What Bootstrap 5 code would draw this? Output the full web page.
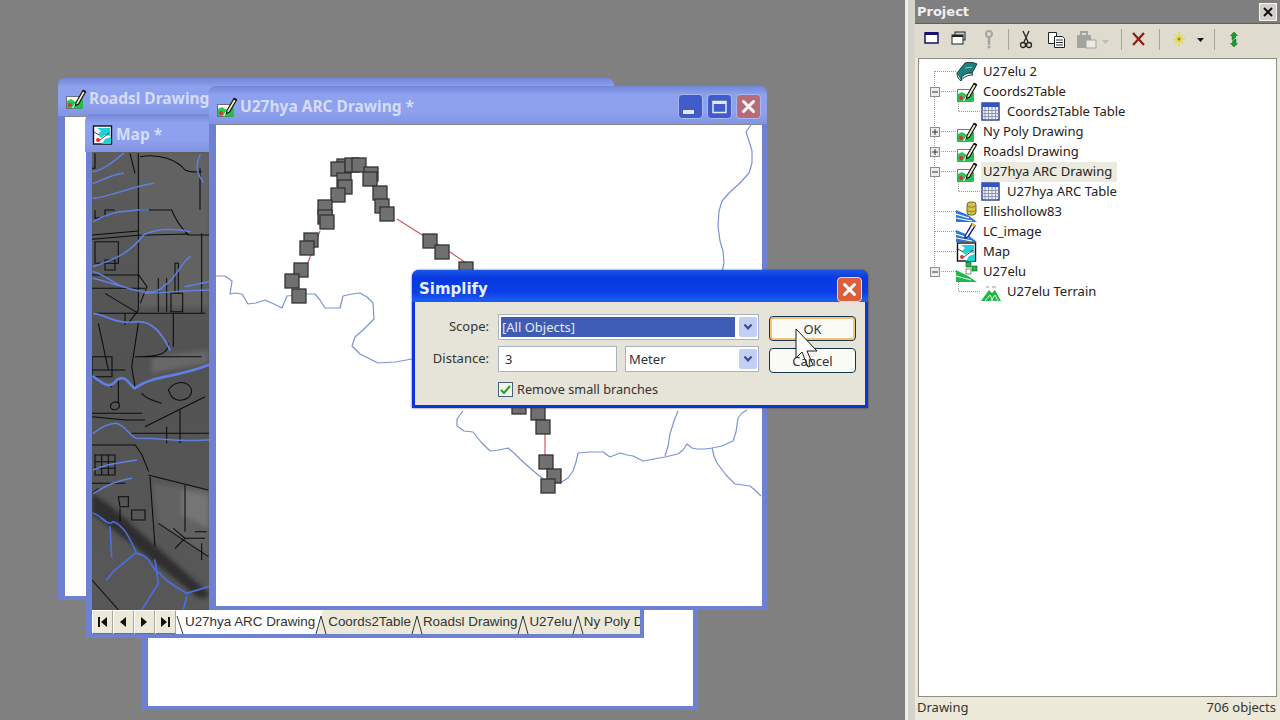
<!DOCTYPE html>
<html lang="en">
<head>
  <meta charset="UTF-8" />
  <meta name="viewport" content="width=device-width, initial-scale=1">
  <title>Simplify</title>
  <link href="https://cdn.jsdelivr.net/npm/bootstrap@5.3.3/dist/css/bootstrap.min.css" rel="stylesheet">
  <style>
    html, body { height: 100%; overflow: hidden; }
    body { font-family: "Noto Sans", sans-serif; font-size: 13px; color: #222; background: #808080; }
    .app-shell { width: 1280px; height: 720px; }
    .mdi-area { width: 905px; background: #808080; position: relative; overflow: hidden; }
    .splitter { width: 10px; background: #d6d3ca; border-left: 3px solid #efeee8; }

    /* desktop windows */
    .doc-win { position: absolute; background: #6d80d2; border-radius: 7px 7px 0 0; padding: 0 5px 4px 7px; }
    .win-blank { left: 142px; top: 200px; width: 556px; height: 510px; padding-left: 6px; }
    .win-roads { left: 58px; top: 78px; width: 556px; height: 522px; }
    .win-map { left: 86px; top: 114px; width: 558px; height: 524px; padding-left: 6px; }
    .win-arc { left: 209px; top: 86px; width: 558px; height: 524px; }
    .win-caption { height: 38px; margin: 0 -5px 0 -7px; padding: 4px 6px 0 7px; background: linear-gradient(#7387d8 0, #8ea1ee 9px, #8ea1ee 26px, #8094e2 38px); border-radius: 7px 7px 0 0; color: #d5dcf8; font-family: "Noto Sans", sans-serif; font-weight: 700; font-size: 15.5px; white-space: nowrap; gap: 2px; }
    .win-caption svg { flex: none; }
    .client-white { background: #fff; border-top: 1px solid #8a8a8a; }
    .cap-btn { width: 25px; height: 25px; border-radius: 4px; border: 1px solid #a9b8f0; background: #3f5cc8; }
    .cap-close { background: #b76a78; }

    /* map window tabs */
    .map-pic { width: 117px; height: 458px; display: block; }
    .sheet-tabs { position: absolute; left: 6px; top: 496px; width: 548px; height: 24px; background: #ece9d8; font-family: "Liberation Sans", sans-serif; font-size: 13.4px; overflow: hidden; white-space: nowrap; }
    .sheet-nav { width: 21px; height: 24px; flex: none; background: #ece9d8; border: 1px solid #fff; border-right-color: #aca899; border-bottom-color: #716f64; }
    .sheet-tab { height: 24px; line-height: 23px; color: #333; flex: none; }
    .sheet-active { background: #fff; }
    .sheet-tabs svg { flex: none; }

    /* simplify dialog */
    .simplify-dlg { position: absolute; left: 412px; top: 270px; width: 456px; height: 138px; background: #0a36d8; border-radius: 7px 7px 0 0; padding: 0 3px 3px; box-shadow: 0 0 2px #333; }
    .dlg-caption { height: 32px; flex: none; margin: 0 -3px; padding: 6px 6px 0 7px; background: linear-gradient(#1c58e6 0, #0839e0 8px, #0a3ee6 22px, #1a5cf0 30px); border-radius: 7px 7px 0 0; color: #e8effc; font-family: "DejaVu Sans", sans-serif; font-weight: 700; font-size: 15px; }
    .dlg-close { width: 25px; height: 25px; border-radius: 4px; border: 1px solid #f3d8cc; background: #d9603b; }
    .dlg-body { height: 103px; background: #e6e3d8; color: #333; position: relative; }
    .dlg-form { width: 350px; padding-top: 12px; }
    .dlg-label { width: 74px; text-align: right; margin-right: 9px; font-size: 13px; }
    .xp-field { height: 26px; border: 1px solid #a9b3bf; background: #fff; display: flex; align-items: center; padding: 0 1px 0 2px; font-size: 13px; color: #333; }
    .field-scope { width: 261px; }
    .field-num { width: 119px; height: 26px; border-radius: 0; padding: 0 6px; font-size: 13px; color: #333; border: 1px solid #a9b3bf; }
    .field-unit { width: 134px; margin-left: 8px; }
    .unit-text { padding: 2px 0 0 1px; }
    .row-gap { margin-top: 6px; }
    .check-row { margin-top: 8px; padding-left: 83px; font-size: 12.7px; }
    .sel-text { background: #3e5cb4; color: #e4e9f6; height: 20px; line-height: 20px; padding-left: 1px; }
    .combo-arrow { width: 18px; height: 20px; background: #c2d0f3; border-radius: 2px; margin-left: 4px; flex: none; display: flex; align-items: center; justify-content: center; }
    .btn-stack { padding-top: 14px; gap: 7px; margin-left: 4px; }
    .xp-btn { width: 87px; height: 25px; padding: 0; font-size: 13px; line-height: 22px; color: #333; background: #fbfbf6; border: 1px solid #17364f; border-radius: 4px; }
    .xp-btn:hover { background: #fbfbf6; color: #333; border-color: #17364f; }
    .xp-default { box-shadow: inset 0 0 0 2px #f2c27a; }
    .xp-check { width: 15px; height: 15px; border: 1px solid #46627a; background: #f3f3ea; margin: 0 4px 0 0; flex: none; }
    .mouse-ptr { position: absolute; left: 380px; top: 26px; }
    .over-ptr { position: relative; z-index: 2; }

    /* project panel */
    .project-panel { width: 365px; background: #ece9d8; }
    .panel-title { height: 24px; background: #7f7f7f; padding: 1px 3px 0 2px; color: #f0f0f0; font-family: "DejaVu Sans", sans-serif; font-weight: 700; font-size: 13px; border-bottom: 1px solid #5f5f5f; }
    .panel-x { width: 18px; height: 18px; background: #d4d0c8; border: 1px solid #f4f4f0; }
    .tool-strip { height: 34px; background: #dfdccf; position: relative; }
    .tool-ico { position: absolute; top: 7px; }
    .tool-sep { position: absolute; top: 5px; width: 1px; height: 21px; background: #a8a597; }
    .tree-box { margin: 0 3px; height: 639px; background: #fff; border: 1px solid #8c8c84; position: relative; padding-top: 3px; }
    .tree-lines { position: absolute; left: 0; top: -1px; }
    .tree-row { height: 20px; position: relative; white-space: nowrap; font-size: 13px; color: #222; }
    .lvl-0 { padding-left: 37px; }
    .lvl-1 { padding-left: 61px; }
    .tree-row svg { flex: none; margin-right: 5px; }
    .tree-sel { background: #ecebdf; padding: 0 5px 0 2px; margin-left: -2px; height: 20px; line-height: 19px; margin-top: -1px; }
    .status-strip { height: 23px; padding: 0 4px 2px 2px; font-size: 13px; color: #333; background: #ece9d8; }
  </style>
</head>
<body>
  <svg width="0" height="0" class="position-absolute">
    <defs>
      <filter id="soft" x="-10%" y="-10%" width="120%" height="120%"><feGaussianBlur stdDeviation="7"/></filter>
      <symbol id="ico-drawing" viewBox="0 0 22 22">
        <path d="M1.500 8.500h15v12h-15z" fill="#fff" stroke="#444" stroke-width=".7"/>
        <path d="M8 20.500l6-10 4 1v9z" fill="#21c24a"/>
        <path d="M2 13l4-2 5 3-4 6H2z" fill="#2cc856"/>
        <circle cx="5" cy="17" r="2" fill="#e0303a"/>
        <path d="M11 14.500L18 2.500l2.500 1.500-7 12-3 1.500z" fill="#f2eecb" stroke="#111" stroke-width="1.200"/>
        <path d="M18 2.500l2.500 1.500" stroke="#111" stroke-width="2"/>
      </symbol>
      <symbol id="ico-book" viewBox="0 0 22 22">
        <path d="M1 12L9 2c4-1 8-1 12 1l-5 9c-5 0-10 1-11 7z" fill="#1f7f7c" stroke="#16403f"/>
        <path d="M1 12c0 3 1 6 4 8 2-4 7-6 12-6l-1-2c-5 0-10 1-11 7" fill="#dfe9e6" stroke="#16403f"/>
        <path d="M9 7l7-1" stroke="#7fc8c4"/>
      </symbol>
      <symbol id="ico-table" viewBox="0 0 22 22">
        <rect x="2" y="2" width="17" height="17" fill="#eef0fa" stroke="#223a9c" stroke-width="1.400"/>
        <rect x="2" y="2" width="17" height="4" fill="#3154c8"/>
        <path d="M5 6v13M8.500 6v13M12 6v13M15.500 6v13M2 9.500h17M2 12.500h17M2 15.500h17" stroke="#7d7f9c" stroke-width=".8"/>
      </symbol>
      <symbol id="ico-db" viewBox="0 0 22 22">
        <path d="M0 9l12 5 9 7H0z" fill="#2b78d8"/>
        <path d="M0 13l13 4M0 17l16 3" stroke="#fff" stroke-width="1.200"/>
        <rect x="11" y="1" width="9" height="13" rx="3" fill="#d7c04a" stroke="#6f6a26"/>
        <path d="M11 5c2 1.500 7 1.500 9 0M11 9.500c2 1.500 7 1.500 9 0" stroke="#6f6a26" fill="none" stroke-width=".7"/>
      </symbol>
      <symbol id="ico-image" viewBox="0 0 22 22">
        <path d="M0 9l12 5 9 7H0z" fill="#2b78d8"/>
        <path d="M0 13l13 4M0 17l16 3" stroke="#fff" stroke-width="1.200"/>
        <path d="M9 15L16 3l3 2-7 11-3 1z" fill="#fff" stroke="#15207a" stroke-width="1.400"/>
        <path d="M16 3l3 2" stroke="#e0c030" stroke-width="2.500"/>
      </symbol>
      <symbol id="ico-map" viewBox="0 0 22 22">
        <rect x="1.500" y="2" width="18" height="18" fill="#fff" stroke="#111" stroke-width="1.400"/>
        <path d="M5 4l13 0v8l-5-1-4 3-3-4 3-3z" fill="#22d0d8"/>
        <path d="M10 20l3-5 6-2v7z" fill="#22d0d8"/>
        <path d="M2 8l5 3M8 16l9-7" stroke="#222" stroke-width=".8"/>
        <circle cx="6" cy="16" r="2" fill="#e0303a"/>
      </symbol>
      <symbol id="ico-surface" viewBox="0 0 22 22">
        <path d="M0 9l12 6 9 6H0z" fill="#23b64a"/>
        <path d="M0 15l15 4" stroke="#fff" stroke-width="1"/>
        <rect x="10" y="1" width="5" height="5" fill="#23b64a" stroke="#14541f" stroke-width=".6"/>
        <rect x="16" y="5" width="5" height="5" fill="#23b64a" stroke="#14541f" stroke-width=".6"/>
        <rect x="10" y="8" width="5" height="5" fill="#fff" stroke="#14541f" stroke-width=".6"/>
      </symbol>
      <symbol id="ico-terrain" viewBox="0 0 22 22">
        <path d="M1 20L9 9l3 3 3-3 6 11z" fill="#22b648"/>
        <path d="M5 20l5-6 3 6M11 20l4-6 3 6" stroke="#e8f4e8" fill="none"/>
        <path d="M6 6h3M12 6h4" stroke="#999"/>
      </symbol>
      <symbol id="ico-x" viewBox="0 0 12 12">
        <path d="M2 2l8 8M10 2l-8 8" stroke="#fff" stroke-width="2.400" stroke-linecap="round"/>
      </symbol>
      <symbol id="ico-combo" viewBox="0 0 10 8">
        <path d="M1.500 1.500L5 5.500l3.500-4" fill="none" stroke="#2f4a86" stroke-width="2"/>
      </symbol>
    </defs>
  </svg>

  <div class="app-shell d-flex">
    <div class="mdi-area">
      <div class="doc-win win-blank">
        <div class="client-white h-100"></div>
      </div>

      <div class="doc-win win-roads d-flex flex-column">
        <div class="win-caption d-flex align-items-center"><svg width="22" height="22"><use href="#ico-drawing"/></svg><span>Roadsl Drawing</span></div>
        <div class="client-white flex-grow-1"></div>
      </div>

      <div class="doc-win win-map d-flex flex-column">
        <div class="win-caption d-flex align-items-center"><svg width="22" height="22"><use href="#ico-map"/></svg><span>Map *</span></div>
        <svg class="map-pic" viewBox="21 6 351 1374" preserveAspectRatio="none">
          <defs>
            <linearGradient id="mapShade" x1="0" y1="0" x2="0" y2="1">
              <stop offset="0" stop-color="#5c5c5c"/><stop offset=".45" stop-color="#525252"/><stop offset=".7" stop-color="#555"/><stop offset="1" stop-color="#585858"/>
            </linearGradient>
          </defs>
          <rect x="21" y="6" width="351" height="1374" fill="url(#mapShade)"/>
          <g filter="url(#soft)">
            <path d="M160 10h212v460H160zM200 1000l172 20v200l-150-100z" fill="#626262"/>
            <path d="M290 1020l82 15v100l-82-40z" fill="#747474"/>
            <path d="M200 620l170-20v40l-170 30z" fill="#676767"/>
            <path d="M21 1030l60 40 100 90 191 170v10l-30 5L150 1190 21 1090z" fill="#2e2e2e"/>
          </g>
          <g fill="none" stroke="#0c0c0c" stroke-width="3.200">
            <path d="M160 10v470l-30 40M165 20c60-10 110 10 135 40 20 10 40 5 50 5M135 10l15 60M345 55v125M30 10v45H21"/>
            <path d="M30 180v25l30-5v-20h30M160 180h100c10 25 25 50 50 75h62M21 255l140-12M21 268l140-12 150-4"/>
            <path d="M30 275h70v65H30zM60 330h30v30H60zM21 375h140l25 35-20 50M21 415h160M60 430l50 30 50 30M21 490h340M120 490v35M270 340h10v90h-10zM220 385v100M245 385v100M258 430h35v55h-35zM350 250v240"/>
            <path d="M265 490v100M160 520l-20 130 10 60M40 520l30 140M21 620h60v60H21zM150 620h200M250 580c0 30-20 40-100 40M21 660h100M21 680l60 30"/>
            <path d="M250 720c20-30 60-30 70 0 0 30-40 40-60 20zM100 690v70M80 760c15-10 30 0 20 15-15 10-30 0-20-15zM170 730c20 20 30 20 60 30M21 790h150M21 800l100 10h60M180 830l180-90M285 780v100M245 830v50M140 850h232M21 885h130l20 30 20 50"/>
            <path d="M30 915h60v60H30zM30 935h60M30 955h60M50 915v60M70 915v60M190 975l180 45M195 980l15 210M300 1005v140M100 1040l30 0v30h-25zM105 1075v40M140 1080h40v30h-40zM220 1120l150 100M265 1135l35 30-30 30M300 1165h60M330 1145h35M350 1180v50M21 1290l80 90M21 1000h100M21 1030l20-15"/>
          </g>
          <g fill="none" stroke="#5f7fe4" stroke-linecap="round">
            <path d="M25 65c30-5 60-30 90-55M25 100c30-10 50-25 90-30M25 145c50-5 100-30 180-45M25 215c60-35 100-30 135-35l30 0M25 350c60-20 110-40 150-95 40-20 100-20 140-10M345 15c-20 40 0 70 10 80" stroke-width="4.500"/>
            <path d="M25 365c30 5 50 30 90 45 60 20 100 25 125-5 30-15 50-70 75-85M25 385l90 25M180 430c50 0 120-10 190-10M300 410l70-15" stroke-width="4.500"/>
            <path d="M25 490c40 5 70 35 130 25 50-5 80 45 100 85" stroke-width="5.500"/>
            <path d="M25 680c30 20 50 40 70 10 30-20 40 20 55 25 50-40 120-30 220-70" stroke-width="8"/>
            <path d="M25 850c25-20 50-30 70-30 30 10 40 40 60 45 80 0 130 10 215 5M25 960c40-20 100-25 130-30M25 1030c40-25 80-40 115-45" stroke-width="4.500"/>
            <path d="M25 1090c30 10 40 40 60 25 30 10 50 50 70 95 50 10 40 50 70 60 20 30 50 40 80 60l65-20M75 1130l5 90M150 1210c-30 30-60 40-85 80M210 1230l10 70-50 80M305 1340l-10 40" stroke-width="5" stroke="#4a6ee6"/>
          </g>
        </svg>
        <div class="sheet-tabs d-flex">
          <div class="sheet-nav d-flex align-items-center justify-content-center"><svg width="9" height="10"><path d="M0 0h2v10H0zM9 0v10L3 5z" fill="#111"/></svg></div>
          <div class="sheet-nav d-flex align-items-center justify-content-center"><svg width="7" height="10"><path d="M6 0v10L0 5z" fill="#111"/></svg></div>
          <div class="sheet-nav d-flex align-items-center justify-content-center"><svg width="7" height="10"><path d="M0 0v10l6-5z" fill="#111"/></svg></div>
          <div class="sheet-nav d-flex align-items-center justify-content-center"><svg width="9" height="10"><path d="M7 0h2v10H7zM0 0v10l6-5z" fill="#111"/></svg></div>
          <svg width="9" height="24"><path d="M0 0h9v24H0z" fill="#fff"/><path d="M1 6l6 18" stroke="#333"/></svg>
          <div class="sheet-tab sheet-active">U27hya ARC Drawing</div>
          <svg width="13" height="24"><path d="M0 0h8L2 24H0z" fill="#fff"/><path d="M6 6l-5 18M6 6l5 18" stroke="#333" fill="none"/></svg>
          <div class="sheet-tab">Coords2Table</div>
          <svg width="12" height="24"><path d="M6 6l-5 18M6 6l5 18" stroke="#333" fill="none"/></svg>
          <div class="sheet-tab">Roadsl Drawing</div>
          <svg width="12" height="24"><path d="M6 6l-5 18M6 6l5 18" stroke="#333" fill="none"/></svg>
          <div class="sheet-tab">U27elu</div>
          <svg width="12" height="24"><path d="M6 6l-5 18M6 6l5 18" stroke="#333" fill="none"/></svg>
          <div class="sheet-tab">Ny Poly D</div>
        </div>
      </div>

      <div class="doc-win win-arc d-flex flex-column">
        <div class="win-caption d-flex align-items-center">
          <svg width="22" height="22"><use href="#ico-drawing"/></svg><span class="flex-grow-1">U27hya ARC Drawing *</span>
          <div class="d-flex gap-1 pe-0">
            <div class="cap-btn d-flex align-items-end p-1"><svg width="12" height="5"><rect y="1" width="11" height="4" fill="#e4e8fa"/></svg></div>
            <div class="cap-btn d-flex align-items-center justify-content-center"><svg width="15" height="14"><rect x="1" y="1.500" width="13" height="11" fill="none" stroke="#e4e8fa" stroke-width="1.500"/><rect x="1" y="1" width="13" height="3" fill="#e4e8fa"/></svg></div>
            <div class="cap-btn cap-close d-flex align-items-center justify-content-center"><svg width="15" height="15"><use href="#ico-x"/></svg></div>
          </div>
        </div>
        <div class="client-white flex-grow-1 overflow-hidden">
          <svg width="546" height="482" viewBox="216 124 546 482" class="d-block">
            <g fill="none" stroke="#7b93d6" stroke-width="1.200" stroke-linejoin="round">
              <path d="M216 275L225 275 232 280 231 287 230 293 235 292 242 293 248 303 256 302 265 299 274 303 282 307 287 295 297 294 307 293 315 293 320 299 325 307 340 307 343 295 352 293 360 292 367 296 373 302 374 318 364 328 355 336 352 345 360 353 378 362 395 361 412 358"/>
              <path d="M463 410L457 418 457 425 464 430 473 431 481 441 490 450 499 449 508 447 514 452 520 458 531 468 542 477 551 481 560 482 568 477 573 470 576 461 578 452 590 451 603 451 610 456 620 452 627 454 633 455 643 460 654 458 665 456 678 453 683 449 687 443 692 447 697 448 705 448 712 447 722 445 733 440 736 431 738 417 742 412 747 409"/>
              <path d="M665 455L668 445 670 433 674 420 678 410M712 447L714 455 717 462 726 474 735 483 743 484 750 485 756 490 761 495"/>
              <path d="M751 124L746 131 749 140 752 150 752 162 749 172 740 182 729 192 722 200 719 210 718 225 720 240 723 250 724 262 722 271"/>
            </g>
            <path d="M304 272l16-42M397 218l30 19 20 12 22 15M545 425v36M292 280l4-5" fill="none" stroke="#cf5a5c" stroke-width="1.200"/>
            <g fill="#707070" stroke="#333" stroke-width="1.300">
              <rect x="337" y="158" width="14" height="14"/><rect x="331" y="161" width="14" height="14"/><rect x="345" y="157" width="14" height="14"/>
              <rect x="352" y="157" width="14" height="14"/><rect x="337" y="172" width="14" height="14"/><rect x="338" y="179" width="14" height="14"/>
              <rect x="364" y="166" width="14" height="14"/><rect x="363" y="171" width="14" height="14"/><rect x="331" y="187" width="14" height="14"/>
              <rect x="373" y="185" width="14" height="14"/><rect x="375" y="198" width="14" height="14"/><rect x="380" y="206" width="14" height="14"/>
              <rect x="318" y="199" width="14" height="14"/><rect x="318" y="209" width="14" height="14"/><rect x="320" y="214" width="14" height="14"/>
              <rect x="304" y="232" width="14" height="14"/><rect x="300" y="240" width="14" height="14"/><rect x="294" y="262" width="14" height="14"/>
              <rect x="285" y="273" width="14" height="14"/><rect x="292" y="288" width="14" height="14"/><rect x="423" y="233" width="14" height="14"/>
              <rect x="435" y="244" width="14" height="14"/><rect x="459" y="261" width="14" height="14"/>
              <rect x="512" y="402" width="14" height="11"/><rect x="531" y="405" width="14" height="14"/><rect x="536" y="419" width="14" height="14"/>
              <rect x="539" y="454" width="14" height="14"/><rect x="547" y="468" width="14" height="14"/><rect x="541" y="478" width="14" height="14"/>
            </g>
          </svg>
        </div>
      </div>

      <div class="simplify-dlg d-flex flex-column">
        <div class="dlg-caption d-flex align-items-center justify-content-between">
          <span>Simplify</span>
          <div class="dlg-close d-flex align-items-center justify-content-center"><svg width="15" height="15"><use href="#ico-x"/></svg></div>
        </div>
        <div class="dlg-body d-flex">
          <div class="dlg-form d-flex flex-column">
            <div class="d-flex align-items-center">
              <div class="dlg-label">Scope:</div>
              <div class="xp-field field-scope"><div class="sel-text flex-grow-1">[All Objects]</div><div class="combo-arrow"><svg width="10" height="8"><use href="#ico-combo"/></svg></div></div>
            </div>
            <div class="d-flex align-items-center row-gap">
              <div class="dlg-label">Distance:</div>
              <input type="text" class="form-control field-num" value="3">
              <div class="xp-field field-unit"><div class="flex-grow-1 unit-text">Meter</div><div class="combo-arrow"><svg width="10" height="8"><use href="#ico-combo"/></svg></div></div>
            </div>
            <div class="d-flex align-items-center check-row">
              <div class="xp-check d-flex align-items-center justify-content-center"><svg width="11" height="10"><path d="M1 5l3 3 6-7" fill="none" stroke="#21a121" stroke-width="2"/></svg></div>
              <span>Remove small branches</span>
            </div>
          </div>
          <div class="btn-stack d-flex flex-column">
            <button type="button" class="btn xp-btn xp-default">OK</button>
            <button type="button" class="btn xp-btn"><span class="over-ptr">Cancel</span></button>
          </div>
          <svg class="mouse-ptr" width="26" height="44"><path d="M1 1v29l6-6 6 15 5-2-6-14h10z" fill="#fff" stroke="#1a1a1a" stroke-width="1"/></svg>
        </div>
      </div>
    </div>

    <div class="splitter"></div>

    <div class="project-panel d-flex flex-column">
      <div class="panel-title d-flex align-items-center justify-content-between">
        <span>Project</span>
        <div class="panel-x d-flex align-items-center justify-content-center"><svg width="10" height="10"><path d="M1 1l8 8M9 1L1 9" stroke="#111" stroke-width="2"/></svg></div>
      </div>
      <div class="tool-strip">
        <svg class="tool-ico" style="left:9px" width="16" height="14"><rect x="1" y="2" width="13" height="10" fill="#fff" stroke="#12126e" stroke-width="1.500"/><rect x="1" y="1" width="13" height="3" fill="#12126e"/></svg>
        <svg class="tool-ico" style="left:36px" width="16" height="14"><rect x="4" y="1" width="10" height="8" fill="#ccc" stroke="#222"/><rect x="1" y="4" width="11" height="9" fill="#fff" stroke="#222"/><rect x="1" y="4" width="11" height="2" fill="#222"/></svg>
        <svg class="tool-ico" style="left:69px;top:6px" width="10" height="20"><circle cx="5" cy="4" r="3" fill="none" stroke="#a5a5a0" stroke-width="2"/><path d="M5 7v8" stroke="#a5a5a0" stroke-width="2.500"/><circle cx="5" cy="17" r="1.500" fill="#a5a5a0"/></svg>
        <div class="tool-sep" style="left:93px"></div>
        <svg class="tool-ico" style="left:104px;top:6px" width="14" height="20"><path d="M4 1l5 11M10 1L5 12" stroke="#222" stroke-width="1.300"/><circle cx="4" cy="15" r="2.500" fill="none" stroke="#222" stroke-width="1.300"/><circle cx="10" cy="15" r="2.500" fill="none" stroke="#222" stroke-width="1.300"/></svg>
        <svg class="tool-ico" style="left:132px" width="19" height="18"><path d="M1.500 1.500h8v11h-8z" fill="#fff" stroke="#222"/><path d="M7.500 5.500h8l2 2v9h-10z" fill="#fff" stroke="#222"/><path d="M9 9h7M9 11.500h7M9 14h7" stroke="#333"/></svg>
        <svg class="tool-ico" style="left:161px" width="22" height="18"><rect x="1" y="4" width="14" height="13" fill="#a3a49f"/><rect x="5" y="1" width="6" height="4" fill="none" stroke="#a3a49f" stroke-width="2"/><rect x="10" y="9" width="10" height="8" fill="#ecebe2" stroke="#a3a49f"/></svg>
        <svg class="tool-ico" style="left:187px;top:16px" width="7" height="4"><path d="M0 0h7L3.500 4z" fill="#bbb"/></svg>
        <div class="tool-sep" style="left:206px"></div>
        <svg class="tool-ico" style="left:216px" width="16" height="16"><path d="M2 2l11 12M13 2L2 14" stroke="#8e1c16" stroke-width="2.200"/></svg>
        <div class="tool-sep" style="left:244px"></div>
        <svg class="tool-ico" style="left:257px" width="14" height="16"><path d="M7 1v14M1 8h12M3 4l8 8M11 4l-8 8" stroke="#e5d93b" stroke-width="1.500"/><circle cx="7" cy="8" r="1.500" fill="#9a8e18"/></svg>
        <svg class="tool-ico" style="left:282px;top:14px" width="7" height="4"><path d="M0 0h7L3.500 4z" fill="#111"/></svg>
        <div class="tool-sep" style="left:299px"></div>
        <svg class="tool-ico" style="left:313px" width="12" height="17"><path d="M6 1l3.500 3.500H7.500V7c-1 1-2.500 1-3.500 2V4.500H2.500zM6 16l-3.500-3.500h2V10c1-1 2.500-1 3.500-2v4.500h1.500z" fill="#1e9a32" stroke="#0f5e22" stroke-width=".5"/></svg>
      </div>
      <div class="tree-box flex-grow-0">
        <svg class="tree-lines" width="80" height="240">
          <g stroke="#9a9a9a" stroke-dasharray="1 1" fill="none">
            <path d="M15.500 13v200M16 13.500h21M16 33.500h21M16 73.500h21M16 93.500h21M16 113.500h21M16 153.500h21M16 173.500h21M16 193.500h21M16 213.500h21"/>
            <path d="M39.500 40v14M40 53.500h21M39.500 120v14M40 133.500h21M39.500 220v14M40 233.500h21"/>
          </g>
          <g fill="#ececec" stroke="#8c8c8c">
            <rect x="11.500" y="29.500" width="9" height="9"/><rect x="11.500" y="69.500" width="9" height="9"/><rect x="11.500" y="89.500" width="9" height="9"/><rect x="11.500" y="109.500" width="9" height="9"/><rect x="11.500" y="209.500" width="9" height="9"/>
          </g>
          <path d="M13 34h6M13 74h6M16 71v6M13 94h6M16 91v6M13 114h6M13 214h6" stroke="#333"/>
        </svg>
        <div class="tree-row lvl-0 d-flex align-items-center"><svg width="22" height="22"><use href="#ico-book"/></svg>U27elu 2</div>
        <div class="tree-row lvl-0 d-flex align-items-center"><svg width="22" height="22"><use href="#ico-drawing"/></svg>Coords2Table</div>
        <div class="tree-row lvl-1 d-flex align-items-center"><svg width="22" height="22"><use href="#ico-table"/></svg>Coords2Table Table</div>
        <div class="tree-row lvl-0 d-flex align-items-center"><svg width="22" height="22"><use href="#ico-drawing"/></svg>Ny Poly Drawing</div>
        <div class="tree-row lvl-0 d-flex align-items-center"><svg width="22" height="22"><use href="#ico-drawing"/></svg>Roadsl Drawing</div>
        <div class="tree-row lvl-0 d-flex align-items-center"><svg width="22" height="22"><use href="#ico-drawing"/></svg><span class="tree-sel">U27hya ARC Drawing</span></div>
        <div class="tree-row lvl-1 d-flex align-items-center"><svg width="22" height="22"><use href="#ico-table"/></svg>U27hya ARC Table</div>
        <div class="tree-row lvl-0 d-flex align-items-center"><svg width="22" height="22"><use href="#ico-db"/></svg>Ellishollow83</div>
        <div class="tree-row lvl-0 d-flex align-items-center"><svg width="22" height="22"><use href="#ico-image"/></svg>LC_image</div>
        <div class="tree-row lvl-0 d-flex align-items-center"><svg width="22" height="22"><use href="#ico-map"/></svg>Map</div>
        <div class="tree-row lvl-0 d-flex align-items-center"><svg width="22" height="22"><use href="#ico-surface"/></svg>U27elu</div>
        <div class="tree-row lvl-1 d-flex align-items-center"><svg width="22" height="22"><use href="#ico-terrain"/></svg>U27elu Terrain</div>
      </div>
      <div class="status-strip d-flex align-items-center justify-content-between">
        <span>Drawing</span><span>706 objects</span>
      </div>
    </div>
  </div>
</body>
</html>
